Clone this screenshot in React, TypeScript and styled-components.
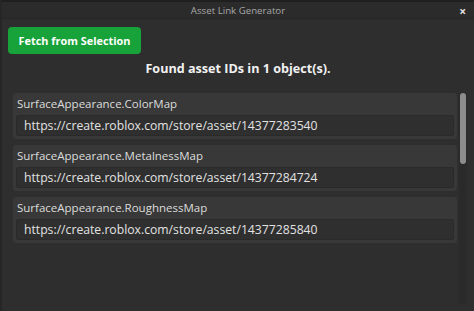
import React from "react";
import styled, { createGlobalStyle } from "styled-components";

const Global = createGlobalStyle`
  html, body { margin: 0; padding: 0; background: #2e2e2e; }
  body { width: 474px; height: 311px; overflow: hidden; }
`;

const Window = styled.div`
  width: 474px;
  height: 311px;
  display: flex;
  flex-direction: column;
  background: #2e2e2e;
  font-family: "Open Sans", "Liberation Sans", sans-serif;
  box-sizing: border-box;
  border-left: 2px solid #262626;
`;

const TitleBar = styled.div`
  height: 19px;
  box-sizing: border-box;
  border-top: 2px solid #1f1f1f;
  border-bottom: 1px solid #262626;
  background: #2b2b2b;
  display: flex;
  align-items: center;
  justify-content: center;
  position: relative;
  color: #a8a8a8;
  font-size: 9.7px;
`;

const Close = styled.span`
  position: absolute;
  right: 8px;
  top: 1px;
  color: #e0e0e0;
  font-size: 12px;
  font-weight: 700;
`;

const Body = styled.div`
  flex: 1;
  display: flex;
  flex-direction: column;
  padding: 8px 0 0 6px;
  min-height: 0;
`;

const FetchButton = styled.button`
  align-self: flex-start;
  width: 133px;
  height: 27px;
  border: none;
  border-radius: 4px;
  background: #17a23a;
  color: #ffffff;
  font-family: inherit;
  font-weight: 700;
  font-size: 10.9px;
  padding: 0;
  cursor: pointer;
`;

const Heading = styled.div`
  text-align: center;
  color: #f2f2f2;
  font-weight: 700;
  font-size: 12.6px;
  line-height: 18px;
  margin-top: 6px;
  padding-right: 6px;
`;

const ScrollArea = styled.div`
  flex: 1;
  display: flex;
  margin-top: 15px;
  padding-left: 5px;
  min-height: 0;
`;

const List = styled.div`
  width: 444px;
  display: flex;
  flex-direction: column;
  gap: 6px;
`;

const Card = styled.div`
  background: #383838;
  border-radius: 3px;
  padding: 2px 3px 3px;
  display: flex;
  flex-direction: column;
`;

const Label = styled.div`
  height: 20px;
  line-height: 18px;
  padding-left: 1px;
  color: #dcdcdc;
  font-size: 11.5px;
`;

const Field = styled.div`
  height: 21px;
  box-sizing: border-box;
  background: #2f2f2f;
  border: 1px solid #2a2a2a;
  border-radius: 2px;
  padding-left: 7px;
  line-height: 19px;
  color: #e2e2e2;
  font-size: 12.2px;
`;

const Track = styled.div`
  width: 8px;
  margin-left: 2px;
  margin-bottom: 7px;
  background: #2a2a2a;
  display: flex;
  justify-content: center;
`;

const Thumb = styled.div`
  width: 6px;
  height: 71px;
  border-radius: 3px;
  background: #8d8d8d;
`;

const items = [
  { name: "SurfaceAppearance.ColorMap", id: "14377283540" },
  { name: "SurfaceAppearance.MetalnessMap", id: "14377284724" },
  { name: "SurfaceAppearance.RoughnessMap", id: "14377285840" },
];

export default function App() {
  return (
    <>
      <Global />
      <Window>
        <TitleBar>
          Asset Link Generator
          <Close>×</Close>
        </TitleBar>
        <Body>
          <FetchButton>Fetch from Selection</FetchButton>
          <Heading>Found asset IDs in 1 object(s).</Heading>
          <ScrollArea>
            <List>
              {items.map((it) => (
                <Card key={it.id}>
                  <Label>{it.name}</Label>
                  <Field>https://create.roblox.com/store/asset/{it.id}</Field>
                </Card>
              ))}
            </List>
            <Track>
              <Thumb />
            </Track>
          </ScrollArea>
        </Body>
      </Window>
    </>
  );
}
